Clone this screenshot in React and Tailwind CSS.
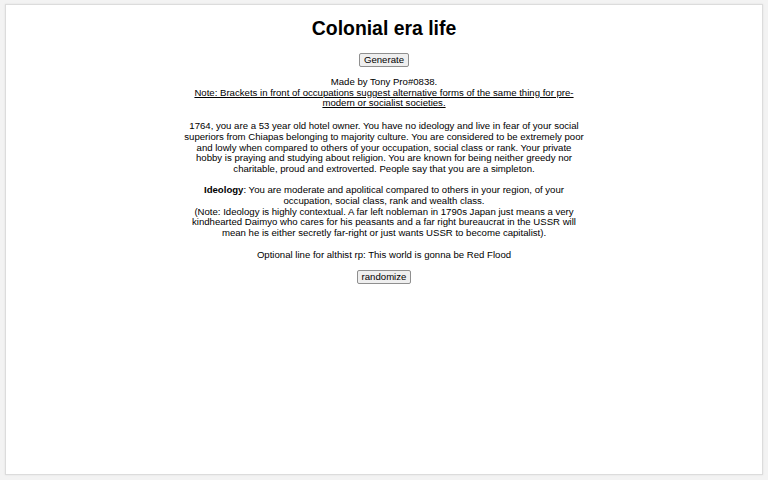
import React from 'react';

export default function App() {
  return (
    <div className="min-h-screen h-[480px] bg-[#f3f3f3] pt-[4px] px-[5px] pb-[5px] font-['Liberation_Sans',Arial,sans-serif] text-black">
      <div className="h-full bg-white border border-[#dcdcdc] shadow-[0_0_2px_rgba(0,0,0,0.08)] flex flex-col items-center text-center">
        <h1 className="mt-[12px] text-[19.4px] leading-[22px] font-bold">Colonial era life</h1>

        <button className="mt-[14px] h-[14px] px-[4px] text-[9.6px] leading-[12px] bg-[#efefef] border border-[#8f8f8f] rounded-[2px]">
          Generate
        </button>

        <div className="mt-[10px] w-[400px] text-[9.6px] leading-[10.7px]">
          <p>Made by Tony Pro#0838.</p>
          <p className="underline">
            Note: Brackets in front of occupations suggest alternative forms of the same thing for pre-modern or socialist societies.
          </p>

          <p className="mt-[12px]">
            1764, you are a 53 year old hotel owner. You have no ideology and live in fear of your social superiors from Chiapas belonging to majority culture. You are considered to be extremely poor and lowly when compared to others of your occupation, social class or rank. Your private hobby is praying and studying about religion. You are known for being neither greedy nor charitable, proud and extroverted. People say that you are a simpleton.
          </p>

          <p className="mt-[10.7px]">
            <b>Ideology</b>: You are moderate and apolitical compared to others in your region, of your occupation, social class, rank and wealth class.
            <br />
            (Note: Ideology is highly contextual. A far left nobleman in 1790s Japan just means a very kindhearted Daimyo who cares for his peasants and a far right bureaucrat in the USSR will mean he is either secretly far-right or just wants USSR to become capitalist).
          </p>

          <p className="mt-[10.7px]">Optional line for althist rp: This world is gonna be Red Flood</p>
        </div>

        <button className="mt-[10px] h-[14px] px-[4px] text-[9.6px] leading-[12px] bg-[#efefef] border border-[#8f8f8f] rounded-[2px]">
          randomize
        </button>
      </div>
    </div>
  );
}
